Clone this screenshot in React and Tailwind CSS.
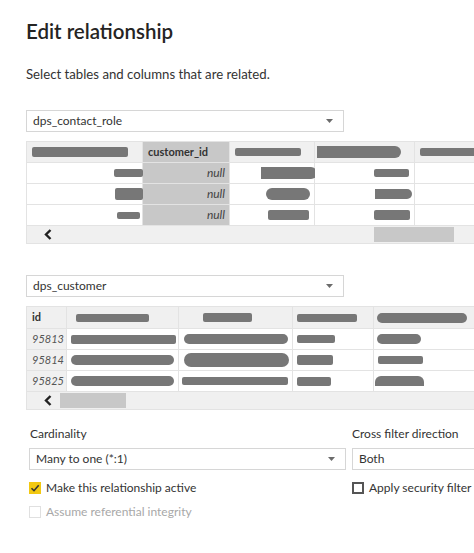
import React from 'react';

const Caret = () => (
  <svg width="7" height="4" viewBox="0 0 7 4" className="shrink-0">
    <path d="M0 0h7L3.5 4z" fill="#6b6b6b" />
  </svg>
);

const Chevron = () => (
  <svg width="8" height="11" viewBox="0 0 8 11">
    <path d="M6.5 1L2 5.5 6.5 10" stroke="#222" strokeWidth="2.4" fill="none" />
  </svg>
);

const Select = ({ value, className = '' }) => (
  <div className={`h-[22px] border border-[#d6d6d6] bg-white flex items-center justify-between pl-[6px] pr-[10px] text-[12px] text-[#333] ${className}`}>
    <span>{value}</span>
    <Caret />
  </div>
);

const Blob = ({ ml = 0, w, h = 9, r = 'rounded-[2px]' }) => (
  <div className={`bg-[#777] shrink-0 ${r}`} style={{ marginLeft: ml, width: w, height: h }} />
);

const table1Cols = [116, 87, 85, 100, 80];
const table1 = {
  header: [
    <Blob ml={5} w={96} h={10} />,
    <span className="font-bold text-[11px] text-[#333] pl-[5px]">customer_id</span>,
    <Blob ml={5} w={66} h={8} />,
    <Blob ml={2} w={84} h={12} r="rounded-r-full" />,
    <Blob ml={5} w={60} h={8} />
  ],
  rows: [
    [<Blob ml={87} w={29} h={8} />, null, <Blob ml={31} w={56} h={12} r="rounded-r-md" />, <Blob ml={59} w={35} h={8} />, null],
    [<Blob ml={88} w={28} h={12} />, null, <Blob ml={36} w={44} h={12} r="rounded-md" />, <Blob ml={60} w={37} h={10} r="rounded-r-md" />, null],
    [<Blob ml={90} w={23} h={7} />, null, <Blob ml={38} w={41} h={10} />, <Blob ml={59} w={36} h={10} />, null]
  ]
};

const table2Cols = [40, 112, 114, 81, 101];
const table2 = {
  header: [
    <span className="font-bold text-[11px] text-[#333] pl-[5px]">id</span>,
    <Blob ml={9} w={73} h={8} />,
    <Blob ml={24} w={49} h={9} />,
    <Blob ml={4} w={60} h={8} />,
    <Blob ml={3} w={90} h={10} r="rounded-full" />
  ],
  rows: [
    ['95813', <Blob ml={4} w={105} h={9} />, <Blob ml={5} w={104} h={10} r="rounded-full" />, <Blob ml={4} w={38} h={8} />, <Blob ml={3} w={44} h={10} r="rounded-md" />],
    ['95814', <Blob ml={4} w={103} h={10} r="rounded-md" />, <Blob ml={5} w={105} h={14} r="rounded-full" />, <Blob ml={4} w={36} h={10} />, <Blob ml={4} w={45} h={8} />],
    ['95825', <Blob ml={4} w={103} h={10} r="rounded-md" />, <Blob ml={3} w={106} h={8} />, <Blob ml={4} w={34} h={9} />, <Blob ml={1} w={49} h={10} r="rounded-t-md" />]
  ]
};

const Table1 = () => (
  <div className="mt-[9px] w-[448px] overflow-hidden border border-[#e3e3e3] border-r-0">
    <div className="flex h-[21px] bg-[#f0f0f0] border-b border-[#e3e3e3]">
      {table1.header.map((c, i) => (
        <div key={i} className={`flex items-center shrink-0 border-r border-[#e3e3e3] ${i === 1 ? 'bg-[#c8c8c8]' : ''}`} style={{ width: table1Cols[i] }}>
          {c}
        </div>
      ))}
    </div>
    {table1.rows.map((row, r) => (
      <div key={r} className="flex h-[21px] border-b border-[#e3e3e3]">
        {row.map((c, i) => (
          <div key={i} className={`flex items-center shrink-0 border-r border-[#e3e3e3] ${i === 1 ? 'bg-[#c8c8c8] justify-end pr-[4px]' : 'bg-white'}`} style={{ width: table1Cols[i] }}>
            {i === 1 ? <span className="italic text-[12px] text-[#444]">null</span> : c}
          </div>
        ))}
      </div>
    ))}
    <div className="flex items-center h-[17px] bg-[#f0f0f0]">
      <div className="ml-[17px]"><Chevron /></div>
      <div className="ml-[322px] w-[80px] h-[15px] bg-[#c8c8c8]" />
    </div>
  </div>
);

const Table2 = () => (
  <div className="mt-[9px] w-[448px] overflow-hidden border border-[#e3e3e3] border-r-0">
    <div className="flex h-[22px] bg-[#f0f0f0] border-b border-[#e3e3e3]">
      {table2.header.map((c, i) => (
        <div key={i} className="flex items-center shrink-0 border-r border-[#e3e3e3]" style={{ width: table2Cols[i] }}>
          {c}
        </div>
      ))}
    </div>
    {table2.rows.map((row, r) => (
      <div key={r} className="flex h-[21px] border-b border-[#e3e3e3]">
        {row.map((c, i) => (
          <div key={i} className={`flex items-center shrink-0 border-r border-[#e3e3e3] ${i === 0 ? 'bg-[#f0f0f0] pl-[5px]' : 'bg-white'}`} style={{ width: table2Cols[i] }}>
            {i === 0 ? <span className="italic text-[11px] text-[#555]">{c}</span> : c}
          </div>
        ))}
      </div>
    ))}
    <div className="flex items-center h-[17px] bg-[#f0f0f0]">
      <div className="ml-[17px]"><Chevron /></div>
      <div className="ml-[8px] w-[66px] h-[15px] bg-[#c8c8c8]" />
    </div>
  </div>
);

export default function App() {
  return (
    <div className="w-[474px] h-[553px] overflow-hidden bg-white font-['Segoe_UI','Lato',sans-serif] text-[#333]">
      <div className="pl-[26px] pt-[17px]">
        <h1 className="text-[20.5px] leading-[28px] font-semibold text-[#252423]">Edit relationship</h1>
        <p className="mt-[19px] text-[13.2px] leading-[20px] text-[#333]">Select tables and columns that are related.</p>

        <Select value="dps_contact_role" className="mt-[26px] w-[318px]" />
        <Table1 />

        <Select value="dps_customer" className="mt-[31px] w-[318px]" />
        <Table2 />
      </div>

      <div className="flex pl-[29px] mt-[15px]">
        <div className="w-[323px] shrink-0">
          <div className="text-[12px] leading-[18px] pl-[1px]">Cardinality</div>
          <Select value="Many to one (*:1)" className="mt-[5px] w-[317px]" />
          <div className="flex items-center gap-[5px] mt-[10px] h-[16px]">
            <div className="w-[12px] h-[12px] bg-[#f2c811] flex items-center justify-center">
              <svg width="10" height="10" viewBox="0 0 10 10">
                <path d="M1.5 5.2L4 7.7 8.7 2.3" stroke="#333" strokeWidth="1.6" fill="none" />
              </svg>
            </div>
            <span className="text-[12px] text-[#333]">Make this relationship active</span>
          </div>
          <div className="flex items-center gap-[5px] mt-[8px] h-[16px]">
            <div className="w-[12px] h-[12px] border border-[#e0e0e0] bg-white" />
            <span className="text-[12px] text-[#a8a8a8]">Assume referential integrity</span>
          </div>
        </div>
        <div className="shrink-0 w-[122px]">
          <div className="text-[12px] leading-[18px]">Cross filter direction</div>
          <div className="mt-[5px] h-[22px] w-[122px] border border-[#d6d6d6] border-r-0 flex items-center pl-[6px] text-[12px]">Both</div>
          <div className="flex items-center gap-[5px] mt-[10px] h-[16px] w-[122px]">
            <div className="w-[12px] h-[12px] border-2 border-[#555] bg-white shrink-0" />
            <span className="text-[12px] text-[#333] whitespace-nowrap">Apply security filter</span>
          </div>
        </div>
      </div>
    </div>
  );
}
